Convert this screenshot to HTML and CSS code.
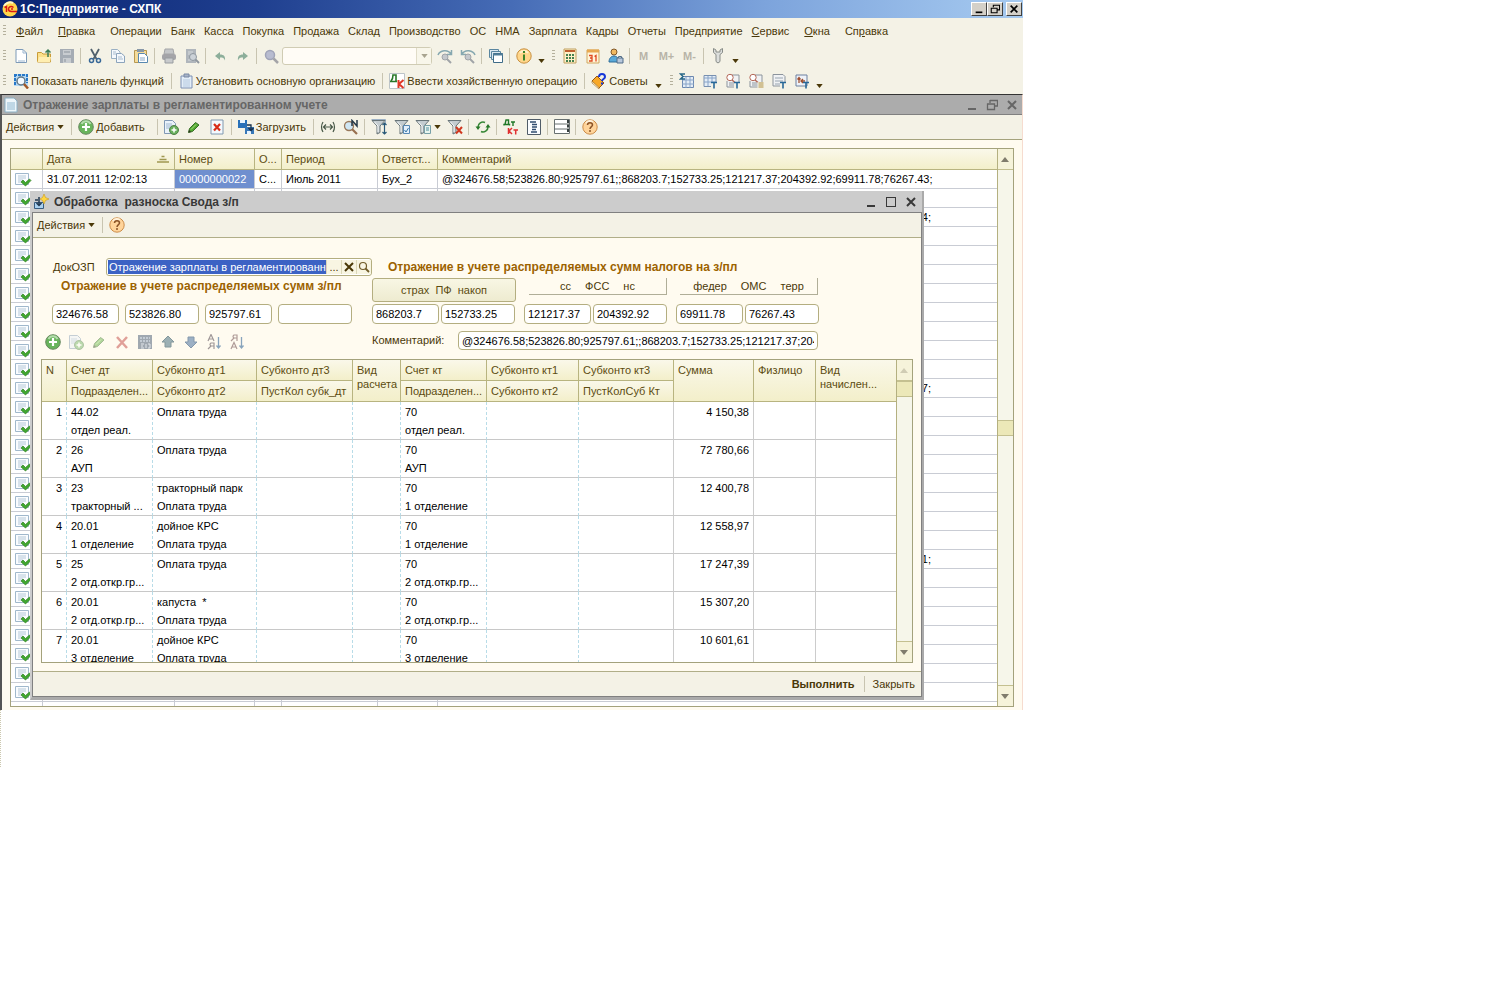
FILE: index.html
```html
<!DOCTYPE html>
<html lang="ru">
<head>
<meta charset="utf-8">
<title>1С:Предприятие - СХПК</title>
<link rel="stylesheet" href="styles.css">
</head>
<body>
<svg class="sprite" aria-hidden="true">
  <symbol id="logo" viewBox="0 0 16 16"><circle cx="8" cy="8" r="7.5" fill="#ffd54a"/><path d="M2 5a7 7 0 0 1 9-3" stroke="#fff6c0" stroke-width="2" fill="none"/><path d="M2.500 6.500 4.500 5.500V11M11.500 6.500C9 4.500 6.500 6 6.500 8s1.500 2.500 3 2.500H15M11 8H9" stroke="#d81818" stroke-width="1.500" fill="none"/></symbol>
  <symbol id="new" viewBox="0 0 16 16"><path d="M3 1.500h7l3.500 3.500v9.500h-10.500z" fill="#fff" stroke="#7d9ab8"/><path d="M10 1.500V5h3.500M5 13h7" fill="none" stroke="#9bb6d0"/></symbol>
  <symbol id="open" viewBox="0 0 16 16"><path d="M1.500 14V4.500h4L7 6h7.500v8z" fill="#fbe08a" stroke="#c99c38"/><path d="M3 9h12l-1 5H1.500z" fill="#ffeeb0"/><path d="M12 9V2M9.500 4.500 12 2l2.500 2.500" fill="none" stroke="#3c7c54" stroke-width="1.500"/></symbol>
  <symbol id="save" viewBox="0 0 16 16"><path d="M1 1h14v14H1z" fill="#a5acb4"/><path d="M4 2h8v5H4zM4 10h8v5H4z" fill="#c8ccd0"/><path d="M5 4h6M6 11v3" stroke="#8c949c"/></symbol>
  <symbol id="cut" viewBox="0 0 16 16"><path d="m4 1 5.500 10M12 1 6.500 11" stroke="#50606c" stroke-width="1.800"/><circle cx="4.500" cy="12.500" r="2" fill="none" stroke="#386898" stroke-width="1.500"/><circle cx="11.500" cy="12.500" r="2" fill="none" stroke="#386898" stroke-width="1.500"/></symbol>
  <symbol id="copy" viewBox="0 0 16 16"><path d="M1.500 1.500h6L10 4v6.500H1.500z" fill="#f4f8fc" stroke="#9ab0c4"/><path d="M6.500 5.500h5L14.500 8v6.500h-8z" fill="#f4f8fc" stroke="#8ca4bc"/><path d="M8 9h4M8 11h5M3 4h3M3 6h3" stroke="#a8bccf"/></symbol>
  <symbol id="paste" viewBox="0 0 16 16"><path d="M1.500 2.500h12v12h-12z" fill="#f5dc9a" stroke="#b89850"/><path d="M4 1h7v3H4z" fill="#8898a8"/><path d="M5.500 5.500h6l3 3v6h-9z" fill="#fff" stroke="#5888b0"/><path d="M7 10h5M7 12h5" stroke="#88a8c8"/></symbol>
  <symbol id="print" viewBox="0 0 16 16"><path d="M4 1h8l1 5H3z" fill="#c4c6c8" stroke="#a4a6a8"/><rect x="1" y="6" width="14" height="6" rx="2" fill="#a4a4a8"/><path d="M4 10h8v5H4z" fill="#c8cacc" stroke="#989ca0"/></symbol>
  <symbol id="preview" viewBox="0 0 16 16"><path d="M2 1h10v14H2z" fill="#b0b6bc"/><path d="M4 4h5M4 6h4M4 12h4" stroke="#d8dcdf"/><circle cx="9" cy="9" r="3.500" fill="#ccd2d8" stroke="#8f979f"/><path d="m11.500 11.500 3.500 3.500" stroke="#8f979f" stroke-width="2"/></symbol>
  <symbol id="undo" viewBox="0 0 16 16"><path d="M3 8 8 4v2.500c4 0 5.500 2 5 6-1-2.500-2-3-5-3V12z" fill="#8cae9a"/></symbol>
  <symbol id="redo" viewBox="0 0 16 16"><path d="M13 8 8 4v2.500c-4 0-5.500 2-5 6 1-2.500 2-3 5-3V12z" fill="#8cae9a"/></symbol>
  <symbol id="find" viewBox="0 0 16 16"><circle cx="7" cy="7" r="4.500" fill="#b8bcd0" stroke="#a0a4b8" stroke-width="1.500"/><path d="m10.500 10.500 4.500 4.500" stroke="#a4a4a8" stroke-width="2.500"/></symbol>
  <symbol id="findnext" viewBox="0 0 16 16"><path d="M1 7c2-5 10-6 13-1M14.500 2v4.500H10" fill="none" stroke="#86a8b0" stroke-width="1.500"/><circle cx="8" cy="9" r="3" fill="#c4c8cc" stroke="#a0a4a8"/><path d="m10 11 4 4" stroke="#a0a4a8" stroke-width="2"/></symbol>
  <symbol id="findprev" viewBox="0 0 16 16"><path d="M15 7C13 2 5 1 2 6M1.500 2v4.500H6" fill="none" stroke="#86a8b0" stroke-width="1.500"/><circle cx="8" cy="9" r="3" fill="#c4c8cc" stroke="#a0a4a8"/><path d="m10 11 4 4" stroke="#a0a4a8" stroke-width="2"/></symbol>
  <symbol id="windows" viewBox="0 0 16 16"><path d="M1.500 1.500h9v8h-9z" fill="#dce8f0" stroke="#5a86a0"/><path d="M3.500 3.500h9v8h-9z" fill="#dce8f0" stroke="#5a86a0"/><path d="M5.500 5.500h9v9h-9z" fill="#fff" stroke="#3f6c88"/><path d="M5 6.500h10" stroke="#4f7c98" stroke-width="2"/></symbol>
  <symbol id="info" viewBox="0 0 16 16"><circle cx="8" cy="8" r="7.200" fill="#ffd68a" stroke="#c89040"/><path d="M4 5a5 5 0 0 1 8 0" fill="none" stroke="#fff0cc" stroke-width="2"/><path d="M8 3v2M8 6.500V12.500" stroke="#3c8428" stroke-width="2"/></symbol>
  <symbol id="help" viewBox="0 0 16 16"><circle cx="8" cy="8" r="7.200" fill="#ffd49a" stroke="#cc8c48"/><path d="M4 4a5 5 0 0 1 7-1" fill="none" stroke="#fff0d8" stroke-width="2"/><path d="M5.500 6c0-3 5-3 5 0C10.500 7.500 8 7.800 8 10M8 11v2" fill="none" stroke="#8c5428" stroke-width="1.500"/></symbol>
  <symbol id="calc" viewBox="0 0 16 16"><path d="M2 1h12v14H2z" fill="#fff0c8" stroke="#c0a060"/><path d="M3 3h10" stroke="#c06030" stroke-width="2"/><path d="M4 7h2M7 7h2M10 7h2M4 10h2M7 10h2M10 10h2M4 13h2M7 13h2M10 13h2" stroke="#448050" stroke-width="2"/></symbol>
  <symbol id="calendar" viewBox="0 0 16 16"><path d="M2 2h12v13H2z" fill="#fff4d8" stroke="#d0a860"/><path d="M2 3h12" stroke="#e8a850" stroke-width="3"/><path d="M4 7.500h3v5.500H4M5 10h2M9.500 8.500 11 7.500V13.500" fill="none" stroke="#e04820" stroke-width="1.300"/></symbol>
  <symbol id="user" viewBox="0 0 16 16"><circle cx="6" cy="4" r="3" fill="#f0b860" stroke="#805828"/><path d="M1 14c0-8 10-8 10 0z" fill="#58a8d8" stroke="#2f6c98"/><path d="M9 10h6v5H9z" fill="#b8c8dc" stroke="#506c88"/><path d="M10.500 10V8.500h3V10" fill="none" stroke="#506c88"/></symbol>
  <symbol id="wrench" viewBox="0 0 16 16"><path d="M3.500.5v4l2.500 2v7q2 3 4 0v-7l2.500-2v-4L10 2v2H6V2z" fill="#dcdedc" stroke="#888c88"/></symbol>
  <symbol id="panel" viewBox="0 0 16 16"><path d="M1 1h14v12H1z" fill="#b4d8f4"/><path d="M1 2h14M2 1v12M14 1v9" stroke="#2878c8" stroke-width="2" stroke-dasharray="3 1"/><circle cx="8" cy="8" r="4" fill="#f4faff" stroke="#607888" stroke-width="1.500"/><path d="m11 11 4 4.500" stroke="#a05828" stroke-width="2.500"/></symbol>
  <symbol id="clip" viewBox="0 0 16 16"><path d="M3 3h11v12H3z" fill="#e4eef8" stroke="#7c90b4"/><path d="M6 1h5v3H6z" fill="#a8b4c8" stroke="#7888a4"/><path d="M5 7h7M5 9h7M5 11h7M5 13h7" stroke="#b4c8e0"/></symbol>
  <symbol id="dk" viewBox="0 0 16 16"><path d="M.5.500h15v15H.500z" fill="#fff" stroke="#bcc4c8"/><path d="M1 8.500h7M2 8c2-2 2-3 2-6h3v6.500" fill="none" stroke="#287828" stroke-width="1.600"/><path d="M9.500 7v8M14.500 7 10 11l4.500 4" fill="none" stroke="#e03828" stroke-width="2"/></symbol>
  <symbol id="book" viewBox="0 0 16 16"><path d="m1 8 5-5 7 7-5 5z" fill="#f8a828" stroke="#985810"/><path d="m1 8 7 6.500v1.500L1 10z" fill="#fff2c8" stroke="#a06820" stroke-width=".6"/><path d="M8 4c0-4 6-4 6 0 0 2-3 2-3 4M11 9.500v2" fill="none" stroke="#1838d8" stroke-width="2"/></symbol>
  <symbol id="sheet" viewBox="0 0 16 16"><path d="M2 2.500h12v11H2z" fill="#e4edf6" stroke="#7890b0"/><path d="M2 5h12M6 3v10M10 3v10M2 9h12" stroke="#88a4c8"/></symbol>
  <symbol id="sum" viewBox="0 0 16 16"><path d="M3.500 3.500h11v11h-11z" fill="#e4edf6" stroke="#6c88b0"/><path d="M3 7h12M7 4v11M11 4v11M3 11h12" stroke="#88a4c8"/><path d="M6 1H1.500L4 3.500 1.500 6H6" fill="none" stroke="#286888" stroke-width="1.500"/></symbol>
  <symbol id="sheett" viewBox="0 0 16 16"><use href="#sheet"/><path d="M9 9h6v6H9z" fill="#f4f2e6"/><path d="M9 9.500h6M12 9v6.500" stroke="#286898" stroke-width="1.600"/></symbol>
  <symbol id="lens" viewBox="0 0 16 16"><path d="M5 2h9v12H2V8" fill="#f0f2f4" stroke="#8c949c"/><path d="M4 10h8M4 12h8" stroke="#8c949c"/><circle cx="5" cy="4.500" r="3.200" fill="#fff" stroke="#b46858"/><path d="m7 7 3 2.500" stroke="#b46858" stroke-width="1.500"/></symbol>
  <symbol id="lenst" viewBox="0 0 16 16"><use href="#lens"/><path d="M9 9h7v7H9z" fill="#f4f2e6"/><path d="M9 9.500h6M12 9v6.500" stroke="#286898" stroke-width="1.600"/></symbol>
  <symbol id="lensl" viewBox="0 0 16 16"><use href="#lens"/><path d="M9.500 9h6.500v7H9.500z" fill="#f4f2e6"/><path d="M10.500 10h5M10.500 12h5M10.500 14h5" stroke="#b09040"/></symbol>
  <symbol id="doct" viewBox="0 0 16 16"><path d="M2 1.500h10l2 2V13H2z" fill="#f0f2f4" stroke="#8c949c"/><path d="M4 5h8M4 8h8M4 11h5" stroke="#98a4b0"/><path d="M9 9h7v7H9z" fill="#f4f2e6"/><path d="M9 9.500h6M12 9v6.500" stroke="#286898" stroke-width="1.600"/></symbol>
  <symbol id="chartt" viewBox="0 0 16 16"><path d="M2 2h11v11H2z" fill="#eef2f8" stroke="#6c80a0"/><path d="M5 10V5M3.500 6.500 5 4.500l1.500 2M7 8h4M9 6 7 8l2 2" fill="none" stroke="#a05030" stroke-width="1.300"/><path d="M9 9.500h6M12 9v6.500" stroke="#286898" stroke-width="1.600"/></symbol>
  <symbol id="doc" viewBox="0 0 16 16"><path d="M2 1h9l3 3v11H2z" fill="#eef6fa" stroke="#8cb0c4"/><path d="M4 6h8M4 8h8M4 10h8M4 12h8" stroke="#90b8d0"/></symbol>
  <symbol id="add" viewBox="0 0 16 16"><circle cx="8" cy="8" r="7.300" fill="#68b45c" stroke="#688860"/><path d="M3.500 5a5 5 0 0 1 9 0" stroke="#b4dcac" stroke-width="2" fill="none"/><path d="M8 4v8M4 8h8" stroke="#fff" stroke-width="2.200"/></symbol>
  <symbol id="adddoc" viewBox="0 0 16 16"><path d="M1.500 1.500h8l3 3v10h-11z" fill="#eaf2fa" stroke="#8098b4"/><path d="M3 5h6M3 7h6M3 9h4" stroke="#a0b8d0"/><circle cx="11" cy="11" r="4.500" fill="#68b05c" stroke="#508048"/><path d="M11 8.500v5M8.500 11h5" stroke="#fff" stroke-width="1.500"/></symbol>
  <symbol id="pencil" viewBox="0 0 16 16"><path d="m2.500 13.500 1-4 6-6L13 6l-6.500 6.500z" fill="#50a830" stroke="#386c28"/><path d="m5 10.500 5-5" stroke="#b0e088"/><path d="m2.500 13.500.5-2.500 2 2z" fill="#303020"/></symbol>
  <symbol id="del" viewBox="0 0 16 16"><path d="M2 1h12v14H2z" fill="#f4f9fd" stroke="#8098b0"/><path d="m5 5 6 6.500M11 5l-6 6.500" stroke="#d82c18" stroke-width="2.200"/></symbol>
  <symbol id="load" viewBox="0 0 16 16"><path d="M0 1h9v8H0z" fill="#2870b8"/><path d="M2 1h5v3H2z" fill="#e8f4ff"/><path d="M7 8h9v7H7z" fill="#3878b8"/><path d="M9 12h4v3H9z" fill="#e8f4ff"/><path d="M9 6h4v5M10.500 9l2.500 2.500L15.500 9" fill="none" stroke="#18304c" stroke-width="1.300"/></symbol>
  <symbol id="interval" viewBox="0 0 16 16"><path d="M3 3Q0 8 3 13M13 3q3 5 0 10M4 8h8M6 5.500 3.500 8 6 10.500M10 5.500 12.500 8 10 10.500" fill="none" stroke="#485848" stroke-width="1.200"/></symbol>
  <symbol id="findn" viewBox="0 0 16 16"><circle cx="6" cy="7" r="4.500" fill="#cfe6f4" stroke="#98785c" stroke-width="1.300"/><path d="m9 10 5 5" stroke="#987050" stroke-width="2.200"/><path d="M9 7V1.500L14 7V1" fill="none" stroke="#243848" stroke-width="1.500"/></symbol>
  <symbol id="funnel" viewBox="0 0 16 16"><path d="M1 1.500h13L9 7v6.500L6 15V7z" fill="#c4ccd0" stroke="#687478"/><path d="M3.500 3 7 7v6" stroke="#f8fafa" fill="none"/></symbol>
  <symbol id="fset" viewBox="0 0 16 16"><path d="M.5.500h14v4" fill="none" stroke="#9cb0c4"/><use href="#funnel"/><path d="M13.500 4v11M11.500 13l2 2 2-2M11.500 6l2-2 2 2" stroke="#285878" fill="none" stroke-width="1.200"/></symbol>
  <symbol id="fval" viewBox="0 0 16 16"><use href="#funnel"/><path d="M9.500 6.500h6v8h-6z" fill="#e4f0fc" stroke="#5888b4"/><path d="m10.500 11 1.500 2 2.500-4" fill="none" stroke="#3878a8"/></symbol>
  <symbol id="fhist" viewBox="0 0 16 16"><use href="#funnel"/><path d="M9.500 6.500h6v8h-6z" fill="#e8f4ee" stroke="#78a0a8"/><path d="M11 9h3M11 11h3" stroke="#5090a0"/></symbol>
  <symbol id="foff" viewBox="0 0 16 16"><use href="#funnel"/><path d="m9 8 6 6.500M15 8l-6 6.500" stroke="#d03820" stroke-width="2"/></symbol>
  <symbol id="refresh" viewBox="0 0 16 16"><path d="M3 8A5 5 0 0 1 10 3.500M13 8A5 5 0 0 1 6 12.500" fill="none" stroke="#388838" stroke-width="1.600"/><path d="M.5 7.500h5L3 11zM10.500 8.500h5L13 5z" fill="#287828"/></symbol>
  <symbol id="dtkt" viewBox="0 0 16 16"><path d="M1 6.500V5.500h5.500v1M2 5.500 3 1h2.500v4.500M8 3h4M10 3v4" fill="none" stroke="#207828" stroke-width="1.400"/><path d="M5.500 9v6M9 9l-3 3 3 3M10.500 11H15M12.700 11v4.500" fill="none" stroke="#e03030" stroke-width="1.500"/></symbol>
  <symbol id="tree" viewBox="0 0 16 16"><path d="M1.500.500h13v15h-13z" fill="#fafcff" stroke="#505c68"/><path d="M4 3h6M6 5.500h5M6 8h5M6 10.500h4M5 13h6" stroke="#304c70" stroke-width="1.300"/></symbol>
  <symbol id="list" viewBox="0 0 16 16"><path d="M.5.500h15v14H.500zM.5 5h15M.5 10h15" fill="#fff" stroke="#687070"/><path d="M14 1v13" stroke="#384040" stroke-width="2" stroke-dasharray="3 1.500"/></symbol>
  <symbol id="proc" viewBox="0 0 16 16"><path d="M1.500 8.500h9v6h-9z" fill="#a8d0f0" stroke="#385c80"/><path d="M6 3v8M3.500 9 6 11.500 8.500 9M2 6h3" fill="none" stroke="#203850" stroke-width="1.500"/><path d="m11 0 1.500 3.500L16 5l-3.500 1.500L11 10 9.500 6.500 7 5l2.500-1.500z" fill="#ffd640" stroke="#c89820" stroke-width=".6"/></symbol>
  <symbol id="end" viewBox="0 0 16 16"><path d="M1 1h14v14H1z" fill="#a0a8b0"/><path d="M3 4h10M3 7h10" stroke="#c4ccd4" stroke-dasharray="2 1" stroke-width="2"/><path d="M4 10h3M4 12h2M4 14h3M9 10v4M11 10h2v4h-2" stroke="#e4e8ec" fill="none"/></symbol>
  <symbol id="redx" viewBox="0 0 16 16"><path d="m3 3 10 11M13 3 3 14" stroke="#e0a098" stroke-width="2.500"/></symbol>
  <symbol id="up" viewBox="0 0 16 16"><path d="m8 2 6 6h-3v5H5V8H2z" fill="#9cb0b4" stroke="#84989c"/></symbol>
  <symbol id="down" viewBox="0 0 16 16"><path d="m8 14 6-6h-3V3H5v5H2z" fill="#9cb0c4" stroke="#8498ac"/></symbol>
  <symbol id="az" viewBox="0 0 16 16"><path d="M2 7 5 .5 8 7M3 5h4M8 15V9H5q-2 1.500 0 3h3M5 12l-3 3" fill="none" stroke="#a09898" stroke-width="1.200"/><path d="M12.500 3v11M10.500 11.500l2 2.500 2-2.500" fill="none" stroke="#88a4bc" stroke-width="1.300"/></symbol>
  <symbol id="za" viewBox="0 0 16 16"><path d="M8 7V1H5q-2 1.500 0 3h3M5 4 2 7M2 15l3-6.500L8 15M3 13h4" fill="none" stroke="#b09c98" stroke-width="1.200"/><path d="M12.500 3v11M10.500 11.500l2 2.500 2-2.500" fill="none" stroke="#88a4bc" stroke-width="1.300"/></symbol>
  <symbol id="posted" viewBox="0 0 18 16"><path d="M1.500 1.500h13v11h-13z" fill="#fafcfe" stroke="#a0b8cc"/><path d="M4 4h8M4 6h8M4 8h5M4 10h3" stroke="#b4c8d8"/><path d="m7 10 2-2 2.500 2.500L15.500 7 17 8.500 11.500 14z" fill="#40a830" stroke="#308020" stroke-width=".7"/></symbol>
  <symbol id="tri" viewBox="0 0 8 5"><path d="M0 0h8L4 5z"/></symbol>
  <symbol id="triup" viewBox="0 0 8 5"><path d="M0 5h8L4 0z"/></symbol>
  <symbol id="sort" viewBox="0 0 12 8"><path d="M4.500 1.500h3M2.500 4.500h7M0 7h12" stroke="#a09850" stroke-width="1.600"/></symbol>
  <symbol id="min" viewBox="0 0 12 12"><path d="M2 10h8" stroke="currentColor" stroke-width="2"/></symbol>
  <symbol id="max" viewBox="0 0 12 12"><path d="M1 1.500h10M1.500 1v10M10.500 1v10M1 10.500h10" stroke="currentColor"/></symbol>
  <symbol id="restore" viewBox="0 0 12 12"><path d="M4 1.500h7.500v5.500H9M4 1v3M1 5h7.500v5.500H1.500V4.500" fill="none" stroke="currentColor" stroke-width="1.300"/></symbol>
  <symbol id="x" viewBox="0 0 12 12"><path d="m2 2 8 8M10 2l-8 8" stroke="currentColor" stroke-width="2"/></symbol>
  <symbol id="mag" viewBox="0 0 12 12"><circle cx="5" cy="5" r="3.500" fill="none" stroke="#705c28" stroke-width="1.200"/><path d="m7.500 7.500 3.500 3.500" stroke="#705c28" stroke-width="1.800"/></symbol>
</svg>

<div class="app">
  <header class="titlebar">
    <svg class="icon"><use href="#logo"/></svg>
    <h1>1С:Предприятие - СХПК</h1>
    <div class="winbtns">
      <button aria-label="Свернуть"><svg><use href="#min"/></svg></button>
      <button aria-label="Восстановить"><svg><use href="#restore"/></svg></button>
      <button class="apart" aria-label="Закрыть"><svg><use href="#x"/></svg></button>
    </div>
  </header>

  <nav class="bar menu">
    <span class="grip"></span>
    <a href="#" class="wide"><u>Ф</u>айл</a><a href="#" class="wide"><u>П</u>равка</a><a href="#">Операции</a><a href="#">Банк</a><a href="#">Касса</a><a href="#">Покупка</a><a href="#">Продажа</a><a href="#">Склад</a><a href="#">Производство</a><a href="#">ОС</a><a href="#">НМА</a><a href="#">Зарплата</a><a href="#">Кадры</a><a href="#">Отчеты</a><a href="#">Предприятие</a><a href="#" class="wide"><u>С</u>ервис</a><a href="#" class="wide"><u>О</u>кна</a><a href="#">Сп<u>р</u>авка</a>
  </nav>

  <div class="bar">
    <span class="grip"></span>
    <button class="tool" aria-label="Новый"><svg class="icon"><use href="#new"/></svg></button>
    <button class="tool" aria-label="Открыть"><svg class="icon"><use href="#open"/></svg></button>
    <button class="tool" aria-label="Сохранить"><svg class="icon"><use href="#save"/></svg></button>
    <span class="sep"></span>
    <button class="tool" aria-label="Вырезать"><svg class="icon"><use href="#cut"/></svg></button>
    <button class="tool" aria-label="Копировать"><svg class="icon"><use href="#copy"/></svg></button>
    <button class="tool" aria-label="Вставить"><svg class="icon"><use href="#paste"/></svg></button>
    <span class="sep"></span>
    <button class="tool" aria-label="Печать"><svg class="icon"><use href="#print"/></svg></button>
    <button class="tool" aria-label="Просмотр"><svg class="icon"><use href="#preview"/></svg></button>
    <span class="sep"></span>
    <button class="tool" aria-label="Отменить"><svg class="icon"><use href="#undo"/></svg></button>
    <button class="tool" aria-label="Повторить"><svg class="icon"><use href="#redo"/></svg></button>
    <span class="sep"></span>
    <button class="tool" aria-label="Найти"><svg class="icon"><use href="#find"/></svg></button>
    <div class="combo"><input type="text" aria-label="Строка поиска"><button aria-label="Список"><svg class="tri"><use href="#tri"/></svg></button></div>
    <button class="tool" aria-label="Найти далее"><svg class="icon"><use href="#findnext"/></svg></button>
    <button class="tool" aria-label="Найти назад"><svg class="icon"><use href="#findprev"/></svg></button>
    <span class="sep"></span>
    <button class="tool" aria-label="Окна"><svg class="icon"><use href="#windows"/></svg></button>
    <span class="sep"></span>
    <button class="tool" aria-label="Сведения"><svg class="icon"><use href="#info"/></svg></button>
    <button class="more" aria-label="Ещё"><svg class="tri"><use href="#tri"/></svg></button>
    <span class="grip inner"></span>
    <button class="tool" aria-label="Калькулятор"><svg class="icon"><use href="#calc"/></svg></button>
    <button class="tool" aria-label="Календарь"><svg class="icon"><use href="#calendar"/></svg></button>
    <button class="tool" aria-label="Пользователи"><svg class="icon"><use href="#user"/></svg></button>
    <span class="sep"></span>
    <button class="tool mem">M</button><button class="tool mem">M+</button><button class="tool mem">M-</button>
    <span class="sep"></span>
    <button class="tool" aria-label="Настройка"><svg class="icon"><use href="#wrench"/></svg></button>
    <button class="more" aria-label="Ещё"><svg class="tri"><use href="#tri"/></svg></button>
  </div>

  <div class="bar last">
    <span class="grip"></span>
    <button class="cmd"><svg class="icon"><use href="#panel"/></svg>Показать панель функций</button>
    <span class="sep"></span>
    <button class="cmd"><svg class="icon"><use href="#clip"/></svg>Установить основную организацию</button>
    <span class="sep"></span>
    <button class="cmd"><svg class="icon"><use href="#dk"/></svg>Ввести хозяйственную операцию</button>
    <span class="sep"></span>
    <button class="cmd"><svg class="icon"><use href="#book"/></svg>Советы</button>
    <button class="more" aria-label="Ещё"><svg class="tri"><use href="#tri"/></svg></button>
    <span class="grip inner"></span>
    <button class="tool" aria-label="Итоги"><svg class="icon"><use href="#sum"/></svg></button>
    <button class="tool" aria-label="Таблица"><svg class="icon"><use href="#sheett"/></svg></button>
    <button class="tool" aria-label="Анализ"><svg class="icon"><use href="#lenst"/></svg></button>
    <button class="tool" aria-label="Карточка"><svg class="icon"><use href="#lensl"/></svg></button>
    <button class="tool" aria-label="Отчет"><svg class="icon"><use href="#doct"/></svg></button>
    <button class="tool" aria-label="Обороты"><svg class="icon"><use href="#chartt"/></svg></button>
    <button class="more" aria-label="Ещё"><svg class="tri"><use href="#tri"/></svg></button>
  </div>

  <main class="window">
    <div class="window-title">
      <svg class="icon"><use href="#doc"/></svg>
      <h2>Отражение зарплаты в регламентированном учете</h2>
      <div class="flatbtns">
        <button aria-label="Свернуть"><svg><use href="#min"/></svg></button>
        <button aria-label="Восстановить"><svg><use href="#restore"/></svg></button>
        <button aria-label="Закрыть"><svg><use href="#x"/></svg></button>
      </div>
    </div>
    <div class="bar window-bar">
      <button class="cmd actions">Действия<svg class="tri"><use href="#tri"/></svg></button>
      <span class="sep"></span>
      <button class="cmd roomy"><svg class="icon"><use href="#add"/></svg><span><u>Д</u>обавить</span></button>
      <span class="sep"></span>
      <button class="tool" aria-label="Скопировать"><svg class="icon"><use href="#adddoc"/></svg></button>
      <button class="tool" aria-label="Изменить"><svg class="icon"><use href="#pencil"/></svg></button>
      <button class="tool" aria-label="Удалить"><svg class="icon"><use href="#del"/></svg></button>
      <span class="sep"></span>
      <button class="cmd"><svg class="icon"><use href="#load"/></svg>Загрузить</button>
      <span class="sep"></span>
      <button class="tool" aria-label="Интервал"><svg class="icon"><use href="#interval"/></svg></button>
      <button class="tool" aria-label="Поиск по номеру"><svg class="icon"><use href="#findn"/></svg></button>
      <span class="sep"></span>
      <button class="tool" aria-label="Отбор"><svg class="icon"><use href="#fset"/></svg></button>
      <button class="tool" aria-label="Отбор по значению"><svg class="icon"><use href="#fval"/></svg></button>
      <button class="tool split" aria-label="История отборов"><svg class="icon"><use href="#fhist"/></svg><svg class="tri"><use href="#tri"/></svg></button>
      <button class="tool" aria-label="Отключить отбор"><svg class="icon"><use href="#foff"/></svg></button>
      <span class="sep"></span>
      <button class="tool" aria-label="Обновить"><svg class="icon"><use href="#refresh"/></svg></button>
      <span class="sep"></span>
      <button class="tool" aria-label="Проводки"><svg class="icon"><use href="#dtkt"/></svg></button>
      <button class="tool" aria-label="Структура"><svg class="icon"><use href="#tree"/></svg></button>
      <span class="sep"></span>
      <button class="tool" aria-label="Список"><svg class="icon"><use href="#list"/></svg></button>
      <span class="sep"></span>
      <button class="tool" aria-label="Справка"><svg class="icon"><use href="#help"/></svg></button>
    </div>

    <div class="journal">
      <div class="grid">
        <table class="journal-table">
          <colgroup><col class="c-icon"><col class="c-date"><col class="c-num"><col class="c-org"><col class="c-per"><col class="c-resp"><col></colgroup>
          <thead><tr><th></th><th>Дата<svg class="sort"><use href="#sort"/></svg></th><th>Номер</th><th>О...</th><th>Период</th><th>Ответст...</th><th>Комментарий</th></tr></thead>
          <tbody>
            <tr><td><svg><use href="#posted"/></svg></td><td>31.07.2011 12:02:13</td><td class="sel">00000000022</td><td>С...</td><td>Июль 2011</td><td>Бух_2</td><td>@324676.58;523826.80;925797.61;;868203.7;152733.25;121217.37;204392.92;69911.78;76267.43;</td></tr>
            <tr><td><svg><use href="#posted"/></svg></td><td></td><td></td><td></td><td></td><td></td><td></td></tr>
            <tr><td><svg><use href="#posted"/></svg></td><td></td><td></td><td></td><td></td><td></td><td class="tail">4;</td></tr>
            <tr><td><svg><use href="#posted"/></svg></td><td></td><td></td><td></td><td></td><td></td><td></td></tr>
            <tr><td><svg><use href="#posted"/></svg></td><td></td><td></td><td></td><td></td><td></td><td></td></tr>
            <tr><td><svg><use href="#posted"/></svg></td><td></td><td></td><td></td><td></td><td></td><td></td></tr>
            <tr><td><svg><use href="#posted"/></svg></td><td></td><td></td><td></td><td></td><td></td><td></td></tr>
            <tr><td><svg><use href="#posted"/></svg></td><td></td><td></td><td></td><td></td><td></td><td></td></tr>
            <tr><td><svg><use href="#posted"/></svg></td><td></td><td></td><td></td><td></td><td></td><td></td></tr>
            <tr><td><svg><use href="#posted"/></svg></td><td></td><td></td><td></td><td></td><td></td><td></td></tr>
            <tr><td><svg><use href="#posted"/></svg></td><td></td><td></td><td></td><td></td><td></td><td></td></tr>
            <tr><td><svg><use href="#posted"/></svg></td><td></td><td></td><td></td><td></td><td></td><td class="tail">7;</td></tr>
            <tr><td><svg><use href="#posted"/></svg></td><td></td><td></td><td></td><td></td><td></td><td></td></tr>
            <tr><td><svg><use href="#posted"/></svg></td><td></td><td></td><td></td><td></td><td></td><td></td></tr>
            <tr><td><svg><use href="#posted"/></svg></td><td></td><td></td><td></td><td></td><td></td><td></td></tr>
            <tr><td><svg><use href="#posted"/></svg></td><td></td><td></td><td></td><td></td><td></td><td></td></tr>
            <tr><td><svg><use href="#posted"/></svg></td><td></td><td></td><td></td><td></td><td></td><td></td></tr>
            <tr><td><svg><use href="#posted"/></svg></td><td></td><td></td><td></td><td></td><td></td><td></td></tr>
            <tr><td><svg><use href="#posted"/></svg></td><td></td><td></td><td></td><td></td><td></td><td></td></tr>
            <tr><td><svg><use href="#posted"/></svg></td><td></td><td></td><td></td><td></td><td></td><td></td></tr>
            <tr><td><svg><use href="#posted"/></svg></td><td></td><td></td><td></td><td></td><td></td><td class="tail">1;</td></tr>
            <tr><td><svg><use href="#posted"/></svg></td><td></td><td></td><td></td><td></td><td></td><td></td></tr>
            <tr><td><svg><use href="#posted"/></svg></td><td></td><td></td><td></td><td></td><td></td><td></td></tr>
            <tr><td><svg><use href="#posted"/></svg></td><td></td><td></td><td></td><td></td><td></td><td></td></tr>
            <tr><td><svg><use href="#posted"/></svg></td><td></td><td></td><td></td><td></td><td></td><td></td></tr>
            <tr><td><svg><use href="#posted"/></svg></td><td></td><td></td><td></td><td></td><td></td><td></td></tr>
            <tr><td><svg><use href="#posted"/></svg></td><td></td><td></td><td></td><td></td><td></td><td></td></tr>
            <tr><td><svg><use href="#posted"/></svg></td><td></td><td></td><td></td><td></td><td></td><td></td></tr>
            <tr class="partial"><td></td><td></td><td></td><td></td><td></td><td></td><td></td></tr>
          </tbody>
        </table>
        <div class="scroll">
          <button aria-label="Вверх"><svg class="tri"><use href="#triup"/></svg></button>
          <span class="space"></span><span class="thumb"></span><span class="space"></span>
          <button aria-label="Вниз"><svg class="tri"><use href="#tri"/></svg></button>
        </div>
      </div>
    </div>

    <section class="dialog">
      <div class="dialog-title">
        <svg class="icon"><use href="#proc"/></svg>
        <h2>Обработка&nbsp; разноска Свода з/п</h2>
        <div class="flatbtns">
          <button aria-label="Свернуть"><svg><use href="#min"/></svg></button>
          <button aria-label="Развернуть"><svg><use href="#max"/></svg></button>
          <button aria-label="Закрыть"><svg><use href="#x"/></svg></button>
        </div>
      </div>
      <div class="dialog-body">
        <div class="bar dialog-bar">
          <button class="cmd actions">Действия<svg class="tri"><use href="#tri"/></svg></button>
          <span class="sep"></span>
          <button class="tool" aria-label="Справка"><svg class="icon"><use href="#help"/></svg></button>
        </div>
        <div class="form">
          <div class="columns">
            <div class="col left">
              <div class="docline">
                <label for="doc-field">ДокОЗП</label>
                <div class="picker">
                  <input id="doc-field" type="text" value="Отражение зарплаты в регламентированном учете">
                  <button aria-label="Выбрать">...</button><button aria-label="Очистить"><svg><use href="#x"/></svg></button><button aria-label="Открыть"><svg><use href="#mag"/></svg></button>
                </div>
              </div>
              <h3>Отражение в учете распределяемых сумм з/пл</h3>
              <div class="sums">
                <input class="s" type="text" aria-label="Сумма 1" value="324676.58"><input class="m" type="text" aria-label="Сумма 2" value="523826.80"><input class="s" type="text" aria-label="Сумма 3" value="925797.61"><input class="m" type="text" aria-label="Сумма 4">
              </div>
              <div class="rowtools">
                <button class="tool" aria-label="Добавить"><svg class="icon"><use href="#add"/></svg></button>
                <button class="tool dim" aria-label="Скопировать"><svg class="icon"><use href="#adddoc"/></svg></button>
                <button class="tool dim" aria-label="Изменить"><svg class="icon"><use href="#pencil"/></svg></button>
                <button class="tool" aria-label="Удалить"><svg class="icon"><use href="#redx"/></svg></button>
                <button class="tool" aria-label="Закончить"><svg class="icon"><use href="#end"/></svg></button>
                <button class="tool" aria-label="Выше"><svg class="icon"><use href="#up"/></svg></button>
                <button class="tool" aria-label="Ниже"><svg class="icon"><use href="#down"/></svg></button>
                <button class="tool" aria-label="По возрастанию"><svg class="icon"><use href="#az"/></svg></button>
                <button class="tool" aria-label="По убыванию"><svg class="icon"><use href="#za"/></svg></button>
              </div>
            </div>
            <div class="col right">
              <h3>Отражение в учете распределяемых сумм налогов на з/пл</h3>
              <div class="groups">
                <button class="pf">страх&nbsp; ПФ&nbsp; накоп</button>
                <div class="group"><span>сс</span><span>ФСС</span><span>нс</span></div>
                <div class="group"><span>федер</span><span>ОМС</span><span>терр</span></div>
              </div>
              <div class="sums taxes">
                <div><input class="s" type="text" aria-label="ПФ страх" value="868203.7"><input class="m" type="text" aria-label="ПФ накоп" value="152733.25"></div>
                <div><input class="s" type="text" aria-label="ФСС сс" value="121217.37"><input class="m" type="text" aria-label="ФСС нс" value="204392.92"></div>
                <div><input class="s" type="text" aria-label="ОМС федер" value="69911.78"><input class="m" type="text" aria-label="ОМС терр" value="76267.43"></div>
              </div>
              <div class="comment">
                <label for="comment">Комментарий:</label>
                <input id="comment" type="text" value="@324676.58;523826.80;925797.61;;868203.7;152733.25;121217.37;204392.92;69911.78;76267.43;">
              </div>
            </div>
          </div>

          <div class="grid entries">
            <table class="entries-table">
              <colgroup><col class="e-n"><col class="e-acc"><col class="e-sub"><col class="e-sub3"><col class="e-kind"><col class="e-acc"><col class="e-kt1"><col class="e-kt3"><col class="e-sum"><col class="e-person"><col></colgroup>
              <thead>
                <tr><th rowspan="2">N</th><th>Счет дт</th><th>Субконто дт1</th><th>Субконто дт3</th><th rowspan="2">Вид<br>расчета</th><th>Счет кт</th><th>Субконто кт1</th><th>Субконто кт3</th><th rowspan="2">Сумма</th><th rowspan="2">Физлицо</th><th rowspan="2" class="edge">Вид<br>начислен...</th></tr>
                <tr><th>Подразделен...</th><th>Субконто дт2</th><th>ПустКол субк_дт</th><th>Подразделен...</th><th>Субконто кт2</th><th>ПустКолСуб Кт</th></tr>
              </thead>
              <tbody>
                <tr><td>1</td><td>44.02<br>отдел реал.</td><td>Оплата труда</td><td></td><td></td><td>70<br>отдел реал.</td><td></td><td></td><td>4 150,38</td><td></td><td></td></tr>
                <tr><td>2</td><td>26<br>АУП</td><td>Оплата труда</td><td></td><td></td><td>70<br>АУП</td><td></td><td></td><td>72 780,66</td><td></td><td></td></tr>
                <tr><td>3</td><td>23<br>тракторный ...</td><td>тракторный парк<br>Оплата труда</td><td></td><td></td><td>70<br>1 отделение</td><td></td><td></td><td>12 400,78</td><td></td><td></td></tr>
                <tr><td>4</td><td>20.01<br>1 отделение</td><td>дойное КРС<br>Оплата труда</td><td></td><td></td><td>70<br>1 отделение</td><td></td><td></td><td>12 558,97</td><td></td><td></td></tr>
                <tr><td>5</td><td>25<br>2 отд.откр.гр...</td><td>Оплата труда</td><td></td><td></td><td>70<br>2 отд.откр.гр...</td><td></td><td></td><td>17 247,39</td><td></td><td></td></tr>
                <tr><td>6</td><td>20.01<br>2 отд.откр.гр...</td><td>капуста&nbsp; *<br>Оплата труда</td><td></td><td></td><td>70<br>2 отд.откр.гр...</td><td></td><td></td><td>15 307,20</td><td></td><td></td></tr>
                <tr><td>7</td><td>20.01<br>3 отделение</td><td>дойное КРС<br>Оплата труда</td><td></td><td></td><td>70<br>3 отделение</td><td></td><td></td><td>10 601,61</td><td></td><td></td></tr>
              </tbody>
            </table>
            <div class="scroll">
              <button class="off" aria-label="Вверх"><svg class="tri"><use href="#triup"/></svg></button>
              <span class="thumb"></span><span class="space"></span>
              <button aria-label="Вниз"><svg class="tri"><use href="#tri"/></svg></button>
            </div>
          </div>
        </div>
        <footer class="dialog-foot">
          <button class="cmd strong">Выполнить</button><span class="sep"></span><button class="cmd">Закрыть</button>
        </footer>
      </div>
    </section>
  </main>
  <div class="remnant"></div>
</div>
</body>
</html>
```
FILE: styles.css
```css
* { box-sizing: border-box; }
body { margin: 0; background: #fff; color: #000; font: 11px/16px "Liberation Sans", Arial, sans-serif; }
.sprite { position: absolute; width: 0; height: 0; }
h1, h2, h3 { margin: 0; font-size: 12px; font-weight: bold; white-space: nowrap; }
button, input { margin: 0; padding: 0; border: 0; background: none; color: inherit; font: inherit; }
button { display: flex; align-items: center; justify-content: center; flex: none; white-space: nowrap; }
svg { display: block; flex: none; }
.icon { width: 16px; height: 16px; }
.tri { width: 7px; height: 4px; fill: #4a3808; }

.app { width: 68.2%; color: #4a3808; }

/* main title */
.titlebar { display: flex; align-items: center; height: 18px; padding: 0 1px 0 2px; gap: 2px; background: linear-gradient(90deg, #0a2472, #1f3f8f 25%, #466cb6 50%, #7da4dc 75%, #a6caf0); color: #fff; }
.winbtns { display: flex; margin-left: auto; }
.winbtns button { width: 16px; height: 14px; background: #d4d0c8; color: #000; border: 1px solid; border-color: #fff #404040 #404040 #fff; }
.winbtns .apart { margin-left: 3px; }
.winbtns svg { width: 10px; height: 10px; }

/* bars */
.bar { display: flex; align-items: center; height: 25px; background: #f4f2e6; white-space: nowrap; }
.bar.last { height: 26px; }
.grip { flex: none; width: 3px; height: 12px; margin: 0 3px; background: repeating-linear-gradient(#b4b09c 0 1px, transparent 1px 3px); }
.grip.inner { margin: 0 3px 0 5px; }
.sep { flex: none; width: 1px; height: 16px; margin: 0 2px; background: #c8c4b0; }
.menu a { margin-right: 9px; color: inherit; text-decoration: none; }
.menu a:first-of-type { margin-left: 7px; }
.menu .wide { margin-right: 15px; }
.tool { width: 23px; height: 22px; }
.tool.split { width: 30px; gap: 3px; }
.tool.dim { opacity: .45; }
.tool.mem { color: #b8b4a8; font-weight: bold; }
.more { width: 12px; height: 22px; padding-top: 10px; }
.cmd { height: 22px; padding: 0 5px 0 4px; gap: 2px; }
.cmd.roomy { padding-right: 10px; }
.cmd.strong { font-weight: bold; }
.actions { gap: 3px; }
.combo { display: flex; flex: none; width: 150px; height: 18px; margin-right: 1px; border: 1px solid #d0ccb4; border-radius: 3px; background: #fffcf6; }
.combo input { flex: 1; min-width: 0; }
.combo button { width: 15px; border-left: 1px solid #e0dcc8; background: #f8f6ea; }
.combo .tri { fill: #a8a490; }

/* journal window */
.window { position: relative; border-left: 2px solid #555; border-right: 1px solid #f6dccf; border-top: 1px solid #333; background: #fffbf0; }
.window-title { display: flex; align-items: center; height: 20px; padding: 0 4px 0 1px; gap: 4px; background: #acacac; border-bottom: 1px solid #808080; color: #666; }
.flatbtns { display: flex; margin-left: auto; gap: 8px; }
.flatbtns svg { width: 12px; height: 12px; }
.window-bar { border-bottom: 1px solid #a4a27c; }
.journal { padding: 8px 8px 3px; }
.grid { display: flex; border: 1px solid #a4a27c; background: #fff; color: #000; }
table { flex: 1; min-width: 0; table-layout: fixed; border-collapse: separate; border-spacing: 0; }
th { padding: 0 4px; height: 21px; border: 0 solid #b8b480; border-width: 0 1px 1px 0; background: linear-gradient(#faf8ea, #f3efca); color: #5c4c10; font-weight: normal; text-align: left; white-space: nowrap; overflow: hidden; }
td { padding: 0 4px; white-space: nowrap; overflow: hidden; }
.journal-table th:last-child, .journal-table td:last-child, .edge { border-right: 0; }
.journal-table { width: 100%; }
.journal-table td { height: 19px; line-height: 18px; border: 0 solid #c9ccd4; border-width: 0 1px 1px 0; }
.journal-table td:first-child { padding: 2px 3px 0; }
.journal-table td svg { width: 18px; height: 16px; }
.journal-table td.sel { background: #6f8fcf; color: #fff; }
.journal-table td.tail { padding-right: 66px; text-align: right; }
.journal-table tr.partial td { height: 4px; padding: 0; border-bottom: 0; }
.sort { width: 12px; height: 8px; float: right; margin: 4px 1px 0 0; }
.c-icon { width: 32px; } .c-date { width: 132px; } .c-num { width: 80px; } .c-org { width: 27px; } .c-per { width: 96px; } .c-resp { width: 60px; }
.scroll { display: flex; flex-direction: column; flex: none; width: 16px; border-left: 1px solid #b4b080; background: #f6f6ea; }
.scroll button { height: 21px; background: #f6f3da; border-bottom: 1px solid #c4c090; }
.scroll button:last-child { border-top: 1px solid #c4c090; border-bottom: 0; }
.scroll .tri { width: 8px; height: 7px; fill: #807c6c; }
.scroll .off .tri { fill: #d0ccb4; }
.thumb { height: 16px; background: #ece8b8; border: 1px solid #c4c090; border-left: 0; border-right: 0; }
.space { flex: 1; }

/* dialog */
.dialog { position: absolute; top: 96px; left: 28px; right: 98px; border: 2px solid #ccc; border-top: 0; border-right-color: #aaa; border-bottom: 3px solid #aaa; background: #ccc; }
.dialog-title { display: flex; align-items: center; height: 21px; padding: 0 5px 0 1px; gap: 5px; color: #383838; }
.dialog-body { border: 1px solid #808080; background: #fffbf0; color: #4a3808; }
.dialog-bar { border-bottom: 1px solid #b0ae88; }
.form { padding: 20px 8px 8px; }
.columns { display: grid; grid-template-columns: 331px 1fr; }
.col { display: grid; grid-template-rows: 18px 24px 20px 24px; row-gap: 2px; }
.left { padding-left: 11px; }
.col h3 { color: #9c6200; }
.left h3 { padding-left: 9px; }
.right h3 { padding-left: 16px; line-height: 18px; }
.docline { display: flex; align-items: center; justify-content: space-between; padding-left: 1px; }
.picker { display: flex; width: 266px; height: 18px; padding: 1px 0 1px 1px; border: 1px solid #b4ae80; border-radius: 3px; background: #fff; }
.picker input { flex: 1; min-width: 0; padding-left: 1px; background: #3c62c4; color: #fff; }
.picker button { width: 15px; background: #f8f5e2; border-left: 1px solid #dcd8b8; }
.picker svg { width: 12px; height: 12px; }
.sums { display: flex; gap: 6px; }
.sums input, .comment input { padding: 0 3px; border: 1px solid #b4ae80; border-radius: 4px; background: #fff; color: #000; }
.s { width: 67px; }
.m { width: 74px; }
.groups { display: flex; gap: 13px; }
.taxes { gap: 9px; }
.taxes > div { display: flex; gap: 2px; }
.rowtools { display: flex; align-items: center; margin: 4px 0 -4px -11px; }
.pf { width: 144px; border: 1px solid #b4ae80; border-radius: 3px; background: linear-gradient(#f8f6e4, #eeebd0); color: #5c4c10; }
.group { display: flex; align-items: center; justify-content: center; gap: 14px; width: 138px; height: 17px; border: 1px solid #b0ae98; border-top: 0; border-left: 0; }
.comment { display: flex; align-items: end; }
.comment label { width: 86px; line-height: 20px; }
.comment input { width: 360px; height: 19px; }
.entries { height: 304px; margin-top: 9px; overflow: hidden; }
.entries-table { width: 100%; height: min-content; }
.entries-table th { padding: 3px 4px 0; line-height: 14px; vertical-align: top; }
.entries-table td { height: 38px; padding: 1px 4px 0; border: 0 solid #c8c8c8; border-width: 0 1px 1px 0; border-right: 1px dashed #b8dce8; line-height: 18px; vertical-align: top; }
.entries-table td:nth-child(1), .entries-table td:nth-child(9) { text-align: right; }
.entries-table td:nth-child(n+8) { border-right: 1px solid #ccc; }
.entries-table td:last-child { border-right: 0; }
.e-n { width: 25px; } .e-acc { width: 86px; } .e-sub { width: 104px; } .e-sub3 { width: 96px; } .e-kind { width: 48px; } .e-kt1 { width: 92px; } .e-kt3 { width: 95px; } .e-sum { width: 80px; } .e-person { width: 62px; }
.dialog-foot { display: flex; align-items: center; justify-content: flex-end; gap: 2px; height: 25px; padding-right: 1px; border-top: 1px solid #b0ae88; background: #f4f2e6; }

.remnant { width: 1px; height: 58px; background: repeating-linear-gradient(#ccc8b0 0 1px, transparent 1px 2px); }
```
